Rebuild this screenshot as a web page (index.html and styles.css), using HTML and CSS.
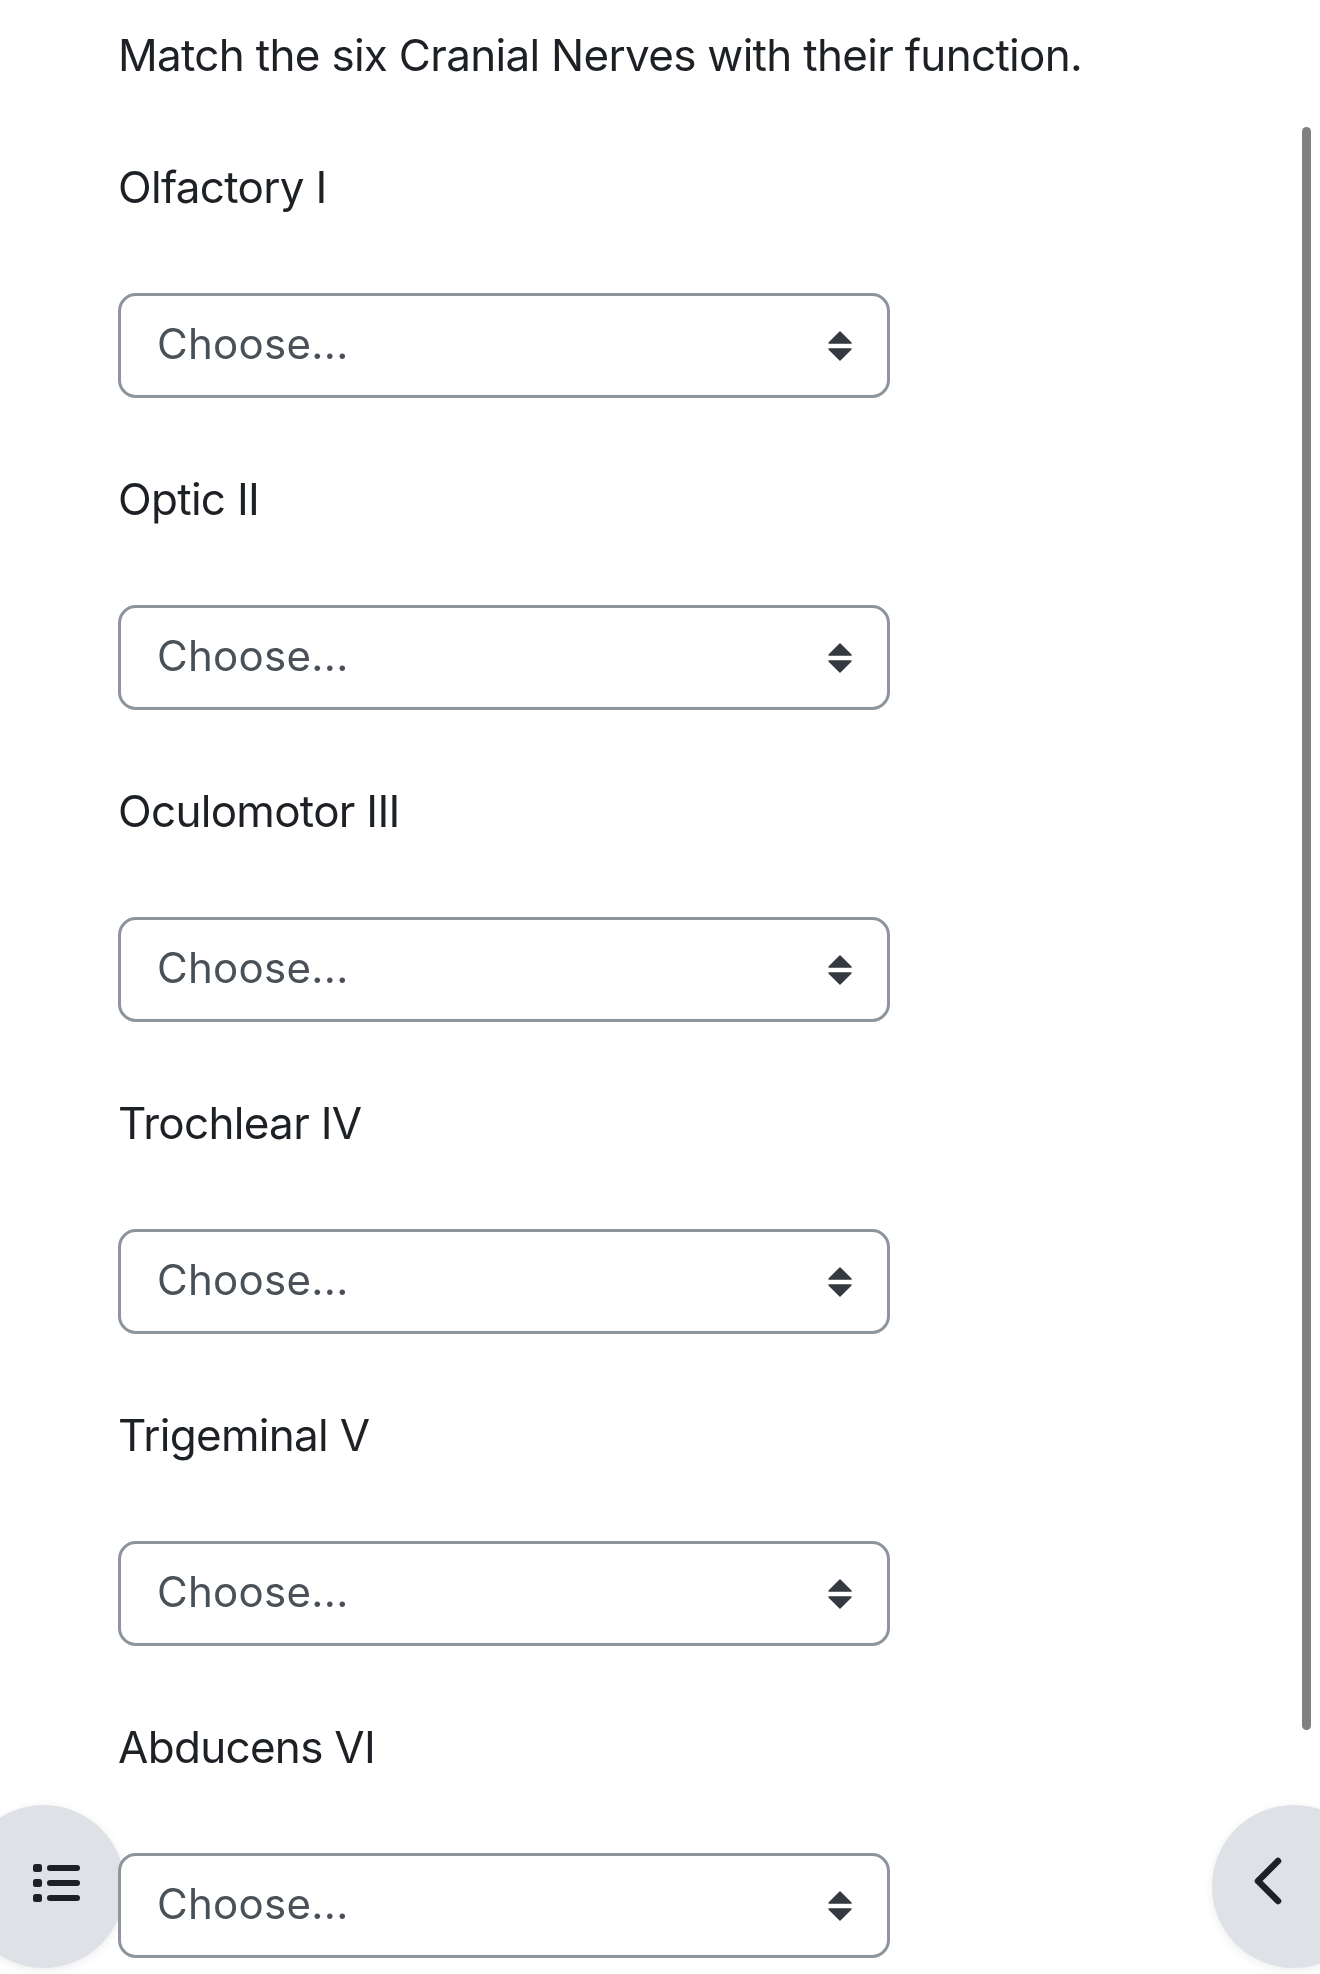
FILE: index.html
```html
<!DOCTYPE html>
<html lang="en">
<head>
<meta charset="utf-8">
<title>Match the six Cranial Nerves</title>
<link rel="stylesheet" href="styles.css">
</head>
<body>
<main class="question">
  <p class="qtext">Match the six Cranial Nerves with their function.</p>
  <div class="item">
    <div class="label">Olfactory I</div>
    <div class="select"><span class="choose">Choose...</span><svg class="arrows" viewBox="0 0 24 30" width="24" height="30"><path d="M1 12 L12 1 L23 12 Z M1 18 L23 18 L12 29 Z" fill="#343a40" stroke="#343a40" stroke-width="1.5" stroke-linejoin="round"/></svg></div>
  </div>
  <div class="item">
    <div class="label">Optic II</div>
    <div class="select"><span class="choose">Choose...</span><svg class="arrows" viewBox="0 0 24 30" width="24" height="30"><path d="M1 12 L12 1 L23 12 Z M1 18 L23 18 L12 29 Z" fill="#343a40" stroke="#343a40" stroke-width="1.5" stroke-linejoin="round"/></svg></div>
  </div>
  <div class="item">
    <div class="label">Oculomotor III</div>
    <div class="select"><span class="choose">Choose...</span><svg class="arrows" viewBox="0 0 24 30" width="24" height="30"><path d="M1 12 L12 1 L23 12 Z M1 18 L23 18 L12 29 Z" fill="#343a40" stroke="#343a40" stroke-width="1.5" stroke-linejoin="round"/></svg></div>
  </div>
  <div class="item">
    <div class="label">Trochlear IV</div>
    <div class="select"><span class="choose">Choose...</span><svg class="arrows" viewBox="0 0 24 30" width="24" height="30"><path d="M1 12 L12 1 L23 12 Z M1 18 L23 18 L12 29 Z" fill="#343a40" stroke="#343a40" stroke-width="1.5" stroke-linejoin="round"/></svg></div>
  </div>
  <div class="item">
    <div class="label">Trigeminal V</div>
    <div class="select"><span class="choose">Choose...</span><svg class="arrows" viewBox="0 0 24 30" width="24" height="30"><path d="M1 12 L12 1 L23 12 Z M1 18 L23 18 L12 29 Z" fill="#343a40" stroke="#343a40" stroke-width="1.5" stroke-linejoin="round"/></svg></div>
  </div>
  <div class="item">
    <div class="label">Abducens VI</div>
    <div class="select"><span class="choose">Choose...</span><svg class="arrows" viewBox="0 0 24 30" width="24" height="30"><path d="M1 12 L12 1 L23 12 Z M1 18 L23 18 L12 29 Z" fill="#343a40" stroke="#343a40" stroke-width="1.5" stroke-linejoin="round"/></svg></div>
  </div>
</main>

<div class="fab fab-left">
  <svg class="list-icon" viewBox="0 0 48 42" width="48" height="42">
    <rect x="0" y="0" width="9" height="8" rx="2.5" fill="#1d2125"/>
    <rect x="0" y="15" width="9" height="8" rx="2.5" fill="#1d2125"/>
    <rect x="0" y="30" width="9" height="8" rx="2.5" fill="#1d2125"/>
    <rect x="14" y="1" width="33" height="6" rx="3" fill="#1d2125"/>
    <rect x="14" y="16" width="33" height="6" rx="3" fill="#1d2125"/>
    <rect x="14" y="31" width="33" height="6" rx="3" fill="#1d2125"/>
  </svg>
</div>
<div class="fab fab-right">
  <svg class="chev" viewBox="0 0 34 50" width="34" height="50">
    <path d="M27 5 L7 25 L27 45" fill="none" stroke="#1d2125" stroke-width="6.5" stroke-linecap="round" stroke-linejoin="round"/>
  </svg>
</div>
<div class="scrollbar"></div>
</body>
</html>
```

FILE: styles.css
```css
html {
  overflow: hidden;
  background: #ffffff;
}

body {
  margin: 0;
  background: #ffffff;
  font-family: Inter, "Noto Sans", "Liberation Sans", sans-serif;
  color: #1d2125;
}

.question {
  position: relative;
  z-index: 1;
  padding: 22px 0 0 118px;
  display: flex;
  flex-direction: column;
}

.qtext {
  margin: 0 0 66px 0;
  font-size: 44px;
  line-height: 66px;
  letter-spacing: -0.7px;
}

.item {
  display: flex;
  flex-direction: column;
  gap: 73px;
  margin-bottom: 68px;
}

.label {
  font-size: 44px;
  line-height: 66px;
  letter-spacing: -0.7px;
}

.select {
  box-sizing: border-box;
  width: 772px;
  height: 105px;
  border: 3px solid #8f959e;
  border-radius: 18px;
  background: #ffffff;
  display: flex;
  align-items: center;
  justify-content: space-between;
  padding: 0 35px 0 36px;
}

.choose {
  font-size: 42px;
  color: #495057;
  letter-spacing: 0.3px;
  margin-top: -4px;
}

.arrows {
  display: block;
}

.fab {
  position: fixed;
  top: 1805px;
  width: 163px;
  height: 163px;
  border-radius: 50%;
  background: #dee2e6;
  box-shadow: 0 2px 10px rgba(0, 0, 0, 0.08);
  display: flex;
  align-items: center;
  z-index: 0;
}

.fab-left {
  left: -38px;
  justify-content: flex-end;
}

.list-icon {
  margin-right: 44px;
  margin-top: -3px;
}

.fab-right {
  left: 1212px;
  justify-content: flex-start;
}

.chev {
  margin-left: 39px;
  margin-top: -12px;
}

.scrollbar {
  position: fixed;
  left: 1302px;
  top: 127px;
  width: 9px;
  height: 1603px;
  border-radius: 4.5px;
  background: #808080;
  z-index: 2;
}
```
